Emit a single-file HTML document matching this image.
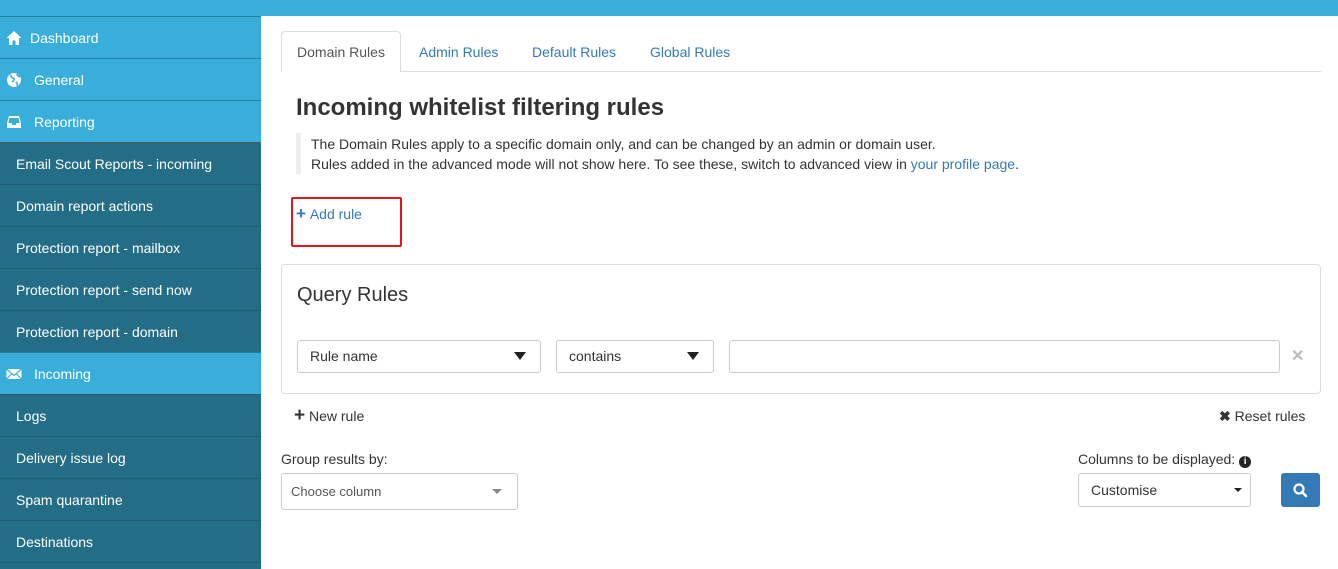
<!DOCTYPE html>
<html><head><meta charset="utf-8"><style>
*{box-sizing:border-box;margin:0;padding:0}
html,body{width:1338px;height:569px;overflow:hidden}
body{background:#fff;font-family:"Liberation Sans",Arial,sans-serif;font-size:14px;color:#333;position:relative}
.a{position:absolute}
.top{left:0;top:0;width:1338px;height:16px;background:#39aedb}
.side{left:0;top:16px;width:261px;height:553px;background:#246d86;overflow:hidden}
.it{position:absolute;left:0;width:261px;height:42px;line-height:42px;color:#fff;font-size:14px;border-top:1px solid #1e5f76;padding-left:16px}
.lt{background:#39aedb;border-top:1px solid #2180a3}
.ic{position:absolute;left:6px;top:13px;width:16px;height:16px}
.blue{color:#337ab7}
.sel{border:1px solid #ccc;border-radius:3px;background:#fff;height:33px;line-height:31px;padding-left:12px}
.tri{position:absolute;width:0;height:0;border-left:6px solid transparent;border-right:6px solid transparent;border-top:8px solid #222}
</style></head><body>
<div class="a top"></div>
<div class="a side">
<div class="it lt" style="top:0px"><svg class="ic" viewBox="0 0 16 16"><path d="M8 1L0.5 8H3v7h3.5v-4.5h3V15H13V8h2.5z" fill="#fff"/></svg><span style="padding-left:14px">Dashboard</span></div>
<div class="it lt" style="top:42px"><svg class="ic" viewBox="0 0 16 16"><circle cx="8" cy="8" r="7" fill="#fff"/><path d="M4 3c2 1 1 3 3 3s1 3 -1 4M10 10c1 1 2 2 1 4M11 2c0 2 2 2 3 3" stroke="#39aedb" stroke-width="1.6" fill="none"/></svg><span style="padding-left:18px">General</span></div>
<div class="it lt" style="top:84px"><svg class="ic" viewBox="0 0 16 16"><path d="M3 2h10l2 7v5H1V9z" fill="#fff"/><path d="M3.5 4h9l1.2 5H10v2H6V9H2.3z" fill="#39aedb"/></svg><span style="padding-left:18px">Reporting</span></div>
<div class="it" style="top:126px;border-top-color:#555">Email Scout Reports - incoming</div>
<div class="it" style="top:168px">Domain report actions</div>
<div class="it" style="top:210px">Protection report - mailbox</div>
<div class="it" style="top:252px">Protection report - send now</div>
<div class="it" style="top:294px">Protection report - domain</div>
<div class="it lt" style="top:336px"><svg class="ic" viewBox="0 0 16 16"><rect x="0.5" y="3" width="15" height="10" fill="#fff"/><path d="M0.5 3L8 9.5 15.5 3M0.5 13L6 7.5M15.5 13L10 7.5" stroke="#39aedb" stroke-width="1.2" fill="none"/></svg><span style="padding-left:18px">Incoming</span></div>
<div class="it" style="top:378px">Logs</div>
<div class="it" style="top:420px">Delivery issue log</div>
<div class="it" style="top:462px">Spam quarantine</div>
<div class="it" style="top:504px">Destinations</div>
<div class="it" style="top:546px;height:7px"></div>
</div>
<div class="a" style="left:281px;top:71px;width:1040px;height:1px;background:#ddd"></div>
<div class="a" style="left:281px;top:31px;width:120px;height:41px;border:1px solid #ddd;border-bottom:none;border-radius:4px 4px 0 0;background:#fff;line-height:40px;text-align:center;color:#555">Domain Rules</div>
<div class="a blue" style="left:419px;top:44px">Admin Rules</div>
<div class="a blue" style="left:532px;top:44px">Default Rules</div>
<div class="a blue" style="left:650px;top:44px">Global Rules</div>
<div class="a" style="left:296px;top:94px;font-size:24px;font-weight:bold;color:#333">Incoming whitelist filtering rules</div>
<div class="a" style="left:296px;top:133px;width:5px;height:41px;background:#eee"></div>
<div class="a" style="left:311px;top:134px;line-height:20px">The Domain Rules apply to a specific domain only, and can be changed by an admin or domain user.<br>Rules added in the advanced mode will not show here. To see these, switch to advanced view in <span class="blue">your profile page</span>.</div>
<div class="a blue" style="left:296px;top:206px"><b style="font-size:17px;line-height:14px">+</b>&nbsp;Add rule</div>
<div class="a" style="left:291px;top:197px;width:111px;height:50px;border:2px solid #e8131b;border-radius:2px"></div>
<div class="a" style="left:281px;top:264px;width:1040px;height:130px;border:1px solid #ddd;border-radius:4px"></div>
<div class="a" style="left:297px;top:284px;font-size:20px;color:#333">Query Rules</div>
<div class="a sel" style="left:297px;top:340px;width:244px">Rule name</div>
<div class="tri" style="left:514px;top:352px"></div>
<div class="a sel" style="left:556px;top:340px;width:158px">contains</div>
<div class="tri" style="left:687px;top:352px"></div>
<div class="a sel" style="left:729px;top:340px;width:551px"></div>
<div class="a" style="left:1291px;top:346px;color:#bbb;font-size:16px;font-weight:bold">&#10005;</div>
<div class="a" style="left:294px;top:408px"><b style="font-size:19px;line-height:14px">+</b> New rule</div>
<div class="a" style="left:1219px;top:408px"><b>&#10006;</b> Reset rules</div>
<div class="a" style="left:281px;top:451px">Group results by:</div>
<div class="a sel" style="left:281px;top:473px;width:237px;height:37px;line-height:35px;color:#555;font-size:13px;padding-left:9px">Choose column</div>
<div class="tri" style="left:492px;top:489px;border-top-color:#888;border-left-width:5px;border-right-width:5px;border-top-width:5px"></div>
<div class="a" style="left:1078px;top:451px">Columns to be displayed: <span style="display:inline-block;width:12px;height:12px;border-radius:50%;background:#222;color:#fff;font-size:10px;line-height:12px;text-align:center;font-weight:bold">i</span></div>
<div class="a sel" style="left:1078px;top:473px;width:173px;height:34px;line-height:32px">Customise</div>
<div class="tri" style="left:1234px;top:488px;border-left-width:4px;border-right-width:4px;border-top-width:4px"></div>
<div class="a" style="left:1281px;top:473px;width:39px;height:34px;background:#337ab7;border-radius:3px">
<svg width="39" height="34"><circle cx="18" cy="16" r="4.5" fill="none" stroke="#fff" stroke-width="2.2"/><line x1="21" y1="19" x2="25" y2="23" stroke="#fff" stroke-width="2.6" stroke-linecap="round"/></svg></div>
</body></html>
